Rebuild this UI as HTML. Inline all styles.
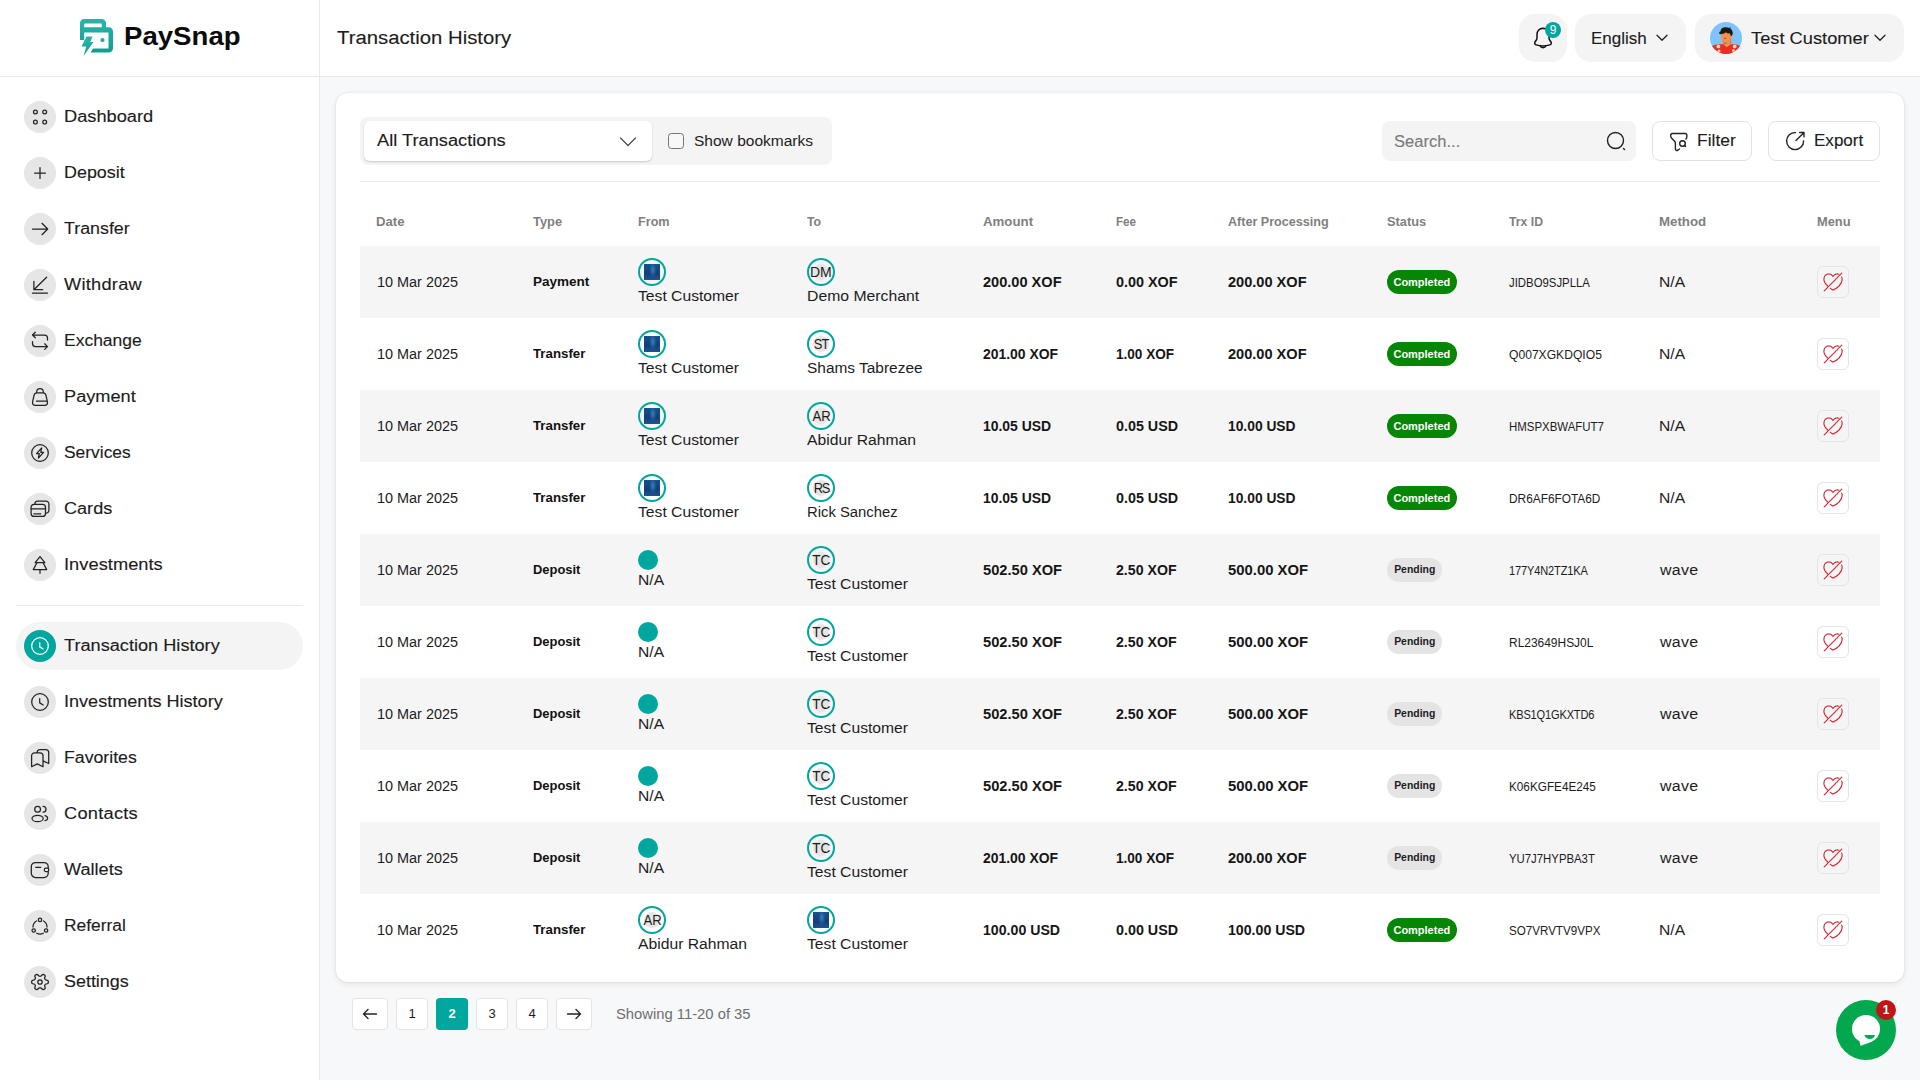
<!DOCTYPE html>
<html lang="en"><head><meta charset="utf-8"><title>Transaction History</title>
<style>
html,body{margin:0;padding:0}
body{width:1920px;height:1080px;overflow:hidden;position:relative;background:#f7f8fa;font-family:"Liberation Sans", sans-serif}
</style></head><body>
<div style="position:absolute;left:0px;top:0px;width:320px;height:1080px;background:#fff;border-right:1px solid #e9e9e9;box-sizing:border-box"></div>
<div style="position:absolute;left:0px;top:76px;width:1920px;height:1px;background:#e9e9e9"></div>
<svg style="position:absolute;left:79px;top:18px" width="35" height="39" viewBox="0 0 35 39"><defs><linearGradient id="lg" x1="0" y1="0" x2="0" y2="1"><stop offset="0" stop-color="#2cb4ac"/><stop offset="1" stop-color="#0f9e93"/></linearGradient></defs>
<path fill="url(#lg)" fill-rule="evenodd" d="M5.200 1H22.800A4.200 4.200 0 0 1 27 5.200V9.300H29.800A4.200 4.200 0 0 1 34 13.500V30.300A4.200 4.200 0 0 1 29.800 34.500H11.500L14 30.500H29.500V14.500H5.200V22H1V5.200A4.200 4.200 0 0 1 5.200 1ZM6 5.500A1 1 0 0 0 5.200 6.500V9.300H22.800V6.500A1 1 0 0 0 21.800 5.500Z"/>
<circle cx="23.500" cy="22" r="2.100" fill="url(#lg)"/>
<path fill="url(#lg)" d="M7.500 18.500H13.500L11.300 24H14.500L4.500 38L7.300 28.500H2.500Z"/>
</svg>
<div style="position:absolute;left:24px;top:101px;width:32px;height:32px;border-radius:50%;background:#e6e6e6"></div>
<svg style="position:absolute;left:30px;top:107px;" width="20" height="20" viewBox="0 0 20 20" fill="none" stroke="#222" stroke-width="1.25" stroke-linecap="round" stroke-linejoin="round"><circle cx="5.4" cy="4.9" r="1.9"/><circle cx="14.7" cy="4.9" r="1.9"/><circle cx="5.4" cy="15.1" r="1.9"/><circle cx="14.7" cy="15.1" r="1.9"/></svg>
<div style="position:absolute;left:24px;top:157px;width:32px;height:32px;border-radius:50%;background:#e6e6e6"></div>
<svg style="position:absolute;left:30px;top:163px;" width="20" height="20" viewBox="0 0 20 20" fill="none" stroke="#222" stroke-width="1.25" stroke-linecap="round" stroke-linejoin="round"><path d="M4.6 10H15.4M10 4.6V15.4"/></svg>
<div style="position:absolute;left:24px;top:213px;width:32px;height:32px;border-radius:50%;background:#e6e6e6"></div>
<svg style="position:absolute;left:30px;top:219px;" width="20" height="20" viewBox="0 0 20 20" fill="none" stroke="#222" stroke-width="1.25" stroke-linecap="round" stroke-linejoin="round"><path d="M2.5 10H17.5M12 4.3L17.7 10L12 15.7"/></svg>
<div style="position:absolute;left:24px;top:269px;width:32px;height:32px;border-radius:50%;background:#e6e6e6"></div>
<svg style="position:absolute;left:30px;top:275px;" width="20" height="20" viewBox="0 0 20 20" fill="none" stroke="#222" stroke-width="1.25" stroke-linecap="round" stroke-linejoin="round"><path d="M16.6 2.2L3.9 14.7M3.9 6.4V14.7H12.7M2.5 18.1H17.5"/></svg>
<div style="position:absolute;left:24px;top:325px;width:32px;height:32px;border-radius:50%;background:#e6e6e6"></div>
<svg style="position:absolute;left:30px;top:331px;" width="20" height="20" viewBox="0 0 20 20" fill="none" stroke="#222" stroke-width="1.25" stroke-linecap="round" stroke-linejoin="round"><path d="M5.3 1.2L2.5 4L5.3 6.8M2.5 4H14.5a3 3 0 0 1 3 3V9.1M14.7 12.8L17.5 15.6L14.7 18.4M17.5 15.6H5.5a3 3 0 0 1-3-3V10.5"/></svg>
<div style="position:absolute;left:24px;top:381px;width:32px;height:32px;border-radius:50%;background:#e6e6e6"></div>
<svg style="position:absolute;left:30px;top:387px;" width="20" height="20" viewBox="0 0 20 20" fill="none" stroke="#222" stroke-width="1.25" stroke-linecap="round" stroke-linejoin="round"><path d="M7 5.8h6c1.6 0 2.6.8 3 2.6l1.4 6.4c.4 2-.6 3.5-2.7 3.5H5.3c-2.1 0-3.1-1.5-2.7-3.5L4 8.4c.4-1.8 1.4-2.6 3-2.6zM6.7 5.8V5a3.3 3.3 0 0 1 6.6 0v.8M6.5 14.2H17.2"/></svg>
<div style="position:absolute;left:24px;top:437px;width:32px;height:32px;border-radius:50%;background:#e6e6e6"></div>
<svg style="position:absolute;left:30px;top:443px;" width="20" height="20" viewBox="0 0 20 20" fill="none" stroke="#222" stroke-width="1.25" stroke-linecap="round" stroke-linejoin="round"><circle cx="10" cy="10" r="8.3"/><path d="M11.700 4.900L6.600 10.600H9.300L8.400 15.100L13.500 9.300H10.800Z"/></svg>
<div style="position:absolute;left:24px;top:493px;width:32px;height:32px;border-radius:50%;background:#e6e6e6"></div>
<svg style="position:absolute;left:30px;top:499px;" width="20" height="20" viewBox="0 0 20 20" fill="none" stroke="#222" stroke-width="1.25" stroke-linecap="round" stroke-linejoin="round"><rect x="1.1" y="5.4" width="14.4" height="12" rx="3"/><path d="M4.8 5.4V5a3 3 0 0 1 3-3H15.9a3 3 0 0 1 3 3V11.2a3 3 0 0 1-3 3h-.4M1.1 9.8H15.5M3.9 14.8H6.2M7.1 14.8H10.8"/></svg>
<div style="position:absolute;left:24px;top:549px;width:32px;height:32px;border-radius:50%;background:#e6e6e6"></div>
<svg style="position:absolute;left:30px;top:555px;" width="20" height="20" viewBox="0 0 20 20" fill="none" stroke="#222" stroke-width="1.25" stroke-linecap="round" stroke-linejoin="round"><path d="M10 1.7L5.2 7.7H14.8ZM6.9 7.7L3.3 14.6H16.7L13.1 7.7M10 14.6V18.3"/></svg>
<div style="position:absolute;left:16px;top:605px;width:287px;height:1px;background:#e9e9e9"></div>
<div style="position:absolute;left:16px;top:622px;width:287px;height:48px;border-radius:24px;background:#f4f4f4"></div>
<div style="position:absolute;left:24px;top:630px;width:32px;height:32px;border-radius:50%;background:#01a79e"></div>
<svg style="position:absolute;left:30px;top:636px;" width="20" height="20" viewBox="0 0 20 20" fill="none" stroke="#fff" stroke-width="1.25" stroke-linecap="round" stroke-linejoin="round"><circle cx="10" cy="10" r="8.3"/><path d="M9.7 6.5V10.9L13.2 13"/></svg>
<div style="position:absolute;left:24px;top:686px;width:32px;height:32px;border-radius:50%;background:#e6e6e6"></div>
<svg style="position:absolute;left:30px;top:692px;" width="20" height="20" viewBox="0 0 20 20" fill="none" stroke="#222" stroke-width="1.25" stroke-linecap="round" stroke-linejoin="round"><circle cx="10" cy="10" r="8.3"/><path d="M9.7 6.5V10.9L13.2 13"/></svg>
<div style="position:absolute;left:24px;top:742px;width:32px;height:32px;border-radius:50%;background:#e6e6e6"></div>
<svg style="position:absolute;left:30px;top:748px;" width="20" height="20" viewBox="0 0 20 20" fill="none" stroke="#222" stroke-width="1.25" stroke-linecap="round" stroke-linejoin="round"><path d="M4.6 4.8H10a3 3 0 0 1 3 3V18.7L7.3 15.9L1.6 18.7V7.8a3 3 0 0 1 3-3zM7.1 4.8V4.6a3 3 0 0 1 3-3H15.7a3 3 0 0 1 3 3V15.5L13 12.9"/></svg>
<div style="position:absolute;left:24px;top:798px;width:32px;height:32px;border-radius:50%;background:#e6e6e6"></div>
<svg style="position:absolute;left:30px;top:804px;" width="20" height="20" viewBox="0 0 20 20" fill="none" stroke="#222" stroke-width="1.25" stroke-linecap="round" stroke-linejoin="round"><circle cx="7.6" cy="5.3" r="2.9"/><ellipse cx="7.6" cy="14.5" rx="5.6" ry="3.2"/><path d="M13.1 2.4a2.9 2.9 0 0 1 0 5.8M15 11.7c1.6.4 2.6 1.4 2.6 2.5s-1 2.100-2.600 2.500"/></svg>
<div style="position:absolute;left:24px;top:854px;width:32px;height:32px;border-radius:50%;background:#e6e6e6"></div>
<svg style="position:absolute;left:30px;top:860px;" width="20" height="20" viewBox="0 0 20 20" fill="none" stroke="#222" stroke-width="1.25" stroke-linecap="round" stroke-linejoin="round"><rect x="1.3" y="2.5" width="16.9" height="15" rx="4.2"/><path d="M5.7 7.300H10.800"/><rect x="14.300" y="8.200" width="4.400" height="3.400" rx="1.500" fill="#f4f4f4"/></svg>
<div style="position:absolute;left:24px;top:910px;width:32px;height:32px;border-radius:50%;background:#e6e6e6"></div>
<svg style="position:absolute;left:30px;top:916px;" width="20" height="20" viewBox="0 0 20 20" fill="none" stroke="#222" stroke-width="1.25" stroke-linecap="round" stroke-linejoin="round"><circle cx="10" cy="3.9" r="1.7"/><circle cx="3.7" cy="14.500" r="1.7"/><circle cx="16.100" cy="14.500" r="1.700"/><path d="M13.500 4.940A7 7 0 0 1 17 11M13.290 17.180A7 7 0 0 1 6.710 17.180M3 11A7 7 0 0 1 6.500 4.940"/></svg>
<div style="position:absolute;left:24px;top:966px;width:32px;height:32px;border-radius:50%;background:#e6e6e6"></div>
<svg style="position:absolute;left:30px;top:972px;" width="20" height="20" viewBox="0 0 20 20" fill="none" stroke="#222" stroke-width="1.25" stroke-linecap="round" stroke-linejoin="round"><path d="M18.30 10.00 L18.28 10.54 L18.23 11.08 L17.71 11.53 L16.81 11.82 L15.91 12.00 L15.36 12.22 L15.20 12.57 L15.02 12.90 L14.82 13.22 L14.60 13.53 L14.69 14.11 L14.99 14.99 L15.18 15.91 L15.05 16.58 L14.61 16.90 L14.15 17.19 L13.67 17.44 L13.18 17.67 L12.53 17.45 L11.82 16.81 L11.22 16.12 L10.76 15.75 L10.38 15.79 L10.00 15.80 L9.62 15.79 L9.24 15.75 L8.78 16.12 L8.18 16.81 L7.47 17.45 L6.82 17.67 L6.33 17.44 L5.85 17.19 L5.39 16.90 L4.95 16.58 L4.82 15.91 L5.01 14.99 L5.31 14.11 L5.40 13.53 L5.18 13.22 L4.98 12.90 L4.80 12.57 L4.64 12.22 L4.09 12.00 L3.19 11.82 L2.29 11.53 L1.77 11.08 L1.72 10.54 L1.70 10.00 L1.72 9.46 L1.77 8.92 L2.29 8.47 L3.19 8.18 L4.09 8.00 L4.64 7.78 L4.80 7.43 L4.98 7.10 L5.18 6.78 L5.40 6.47 L5.31 5.89 L5.01 5.01 L4.82 4.09 L4.95 3.42 L5.39 3.10 L5.85 2.81 L6.33 2.56 L6.82 2.33 L7.47 2.55 L8.18 3.19 L8.78 3.88 L9.24 4.25 L9.62 4.21 L10.00 4.20 L10.38 4.21 L10.76 4.25 L11.22 3.88 L11.82 3.19 L12.53 2.55 L13.18 2.33 L13.67 2.56 L14.15 2.81 L14.61 3.10 L15.05 3.42 L15.18 4.09 L14.99 5.01 L14.69 5.89 L14.60 6.47 L14.82 6.78 L15.02 7.10 L15.20 7.43 L15.36 7.78 L15.91 8.00 L16.81 8.18 L17.71 8.47 L18.23 8.92 L18.28 9.46Z"/><circle cx="10" cy="10" r="2.200"/></svg>
<div style="position:absolute;left:320px;top:0px;width:1600px;height:76px;background:#fff"></div>
<div style="position:absolute;left:1519px;top:14px;width:48px;height:48px;border-radius:16px;background:#f4f4f4"></div>
<div style="position:absolute;left:1575px;top:14px;width:111px;height:48px;border-radius:16px;background:#f4f4f4"></div>
<div style="position:absolute;left:1695px;top:14px;width:209px;height:48px;border-radius:16px;background:#f4f4f4"></div>
<svg style="position:absolute;left:1531px;top:25px;" width="24" height="26" viewBox="0 0 24 26" fill="none" stroke="#111" stroke-width="1.5" stroke-linecap="round" stroke-linejoin="round"><path d="M12 3.200c-3.500 0-6 2.700-6 6.200v3.300c0 .9-.4 2-1 2.800l-1 1.500c-.7 1.200-.2 2.500 1.100 2.900 4.500 1.400 9.300 1.400 13.800 0 1.200-.4 1.800-1.800 1.100-2.900l-1-1.500c-.6-.8-1-1.900-1-2.800V9.400c0-3.400-2.700-6.200-6-6.200z"/><path d="M9 20.800c.6 1.300 1.700 2 3 2s2.400-.7 3-2"/></svg>
<div style="position:absolute;left:1545px;top:22px;width:16px;height:16px;border-radius:50%;background:#01a79e"></div>
<svg style="position:absolute;left:1656px;top:33.5px;" width="12" height="8" viewBox="0 0 12 8" fill="none" stroke="#222" stroke-width="1.3" stroke-linecap="round" stroke-linejoin="round"><path d="M1 1.300L6 6.300L11 1.300"/></svg>
<svg style="position:absolute;left:1710px;top:22px" width="32" height="32" viewBox="0 0 32 32">
<defs><clipPath id="av"><circle cx="16" cy="16" r="16"/></clipPath></defs>
<g clip-path="url(#av)"><rect width="32" height="32" fill="#80c2fb"/>
<path d="M0 26.500c1.500-2.500 4-3.800 8-4.200h16.500c4 .4 6.500 1.700 7.500 4.200V32H0z" fill="#ee2b25"/>
<path d="M11.300 12.500c0-2 1.500-3 4.500-3l5.500.5c1.300 0 1.600 1.300 1.400 2.300-.1.700-.6 1.200-1.300 1.300l-.3 8.700-4.600 3-3-3 .3-1.500c-1.700-.6-2.500-2.300-2.500-4.500z" fill="#f5914a"/>
<path d="M21 13.500v8.800l-1.200.7z" fill="#d9702f"/>
<path d="M9.100 11.500c-.2-1.300.8-2 1.600-2.300-.3-1.500 1-3 3-3.600 1.800-.6 4-.4 5.600.4l1.300-1.300-.2 2c1.500 1 2.400 2.700 2.400 4.600l-.9 2.500-1.200.1-.8-2.600c-1.300.4-3-.2-3.900-1.100-1.300.9-2.800 1.700-4.300 1.700-.9.500-1.900.2-2.600-.4z" fill="#1c1a14"/>
<path d="M14 16.200c.5-.6 1.500-.7 2-.3-.4.800-1.500 1.100-2 .3z" fill="#2b3140"/>
<path d="M13.200 21c1 .5 2.500.5 3.500.2" stroke="#c5342c" stroke-width=".7" fill="none"/>
<circle cx="8.400" cy="24.400" r="1.900" fill="#f8dca8"/><circle cx="24.700" cy="24.400" r="1.900" fill="#f8dca8"/><circle cx="9" cy="28.900" r="1.500" fill="#f6cf96"/><circle cx="23.500" cy="28.500" r="1.500" fill="#f6cf96"/>
</g></svg>
<svg style="position:absolute;left:1874px;top:33.5px;" width="12" height="8" viewBox="0 0 12 8" fill="none" stroke="#222" stroke-width="1.3" stroke-linecap="round" stroke-linejoin="round"><path d="M1 1.300L6 6.300L11 1.300"/></svg>
<div style="position:absolute;left:320px;top:77px;width:1600px;height:1003px;background:#f7f8fa"></div>
<div style="position:absolute;left:336px;top:93px;width:1568px;height:889px;background:#fff;border-radius:12px;box-shadow:0 2px 6px rgba(0,0,0,.09),0 0 2px rgba(0,0,0,.10)"></div>
<div style="position:absolute;left:360px;top:117px;width:472px;height:48px;background:#f4f4f4;border-radius:8px"></div>
<div style="position:absolute;left:364px;top:121px;width:288px;height:40px;background:#fff;border-radius:6px;box-shadow:0 1px 2px rgba(0,0,0,.18)"></div>
<svg style="position:absolute;left:619px;top:135.5px;" width="18" height="12" viewBox="0 0 18 12" fill="none" stroke="#4a4a4a" stroke-width="1.2" stroke-linecap="round" stroke-linejoin="round"><path d="M1.500 2L9 9.500L16.500 2"/></svg>
<div style="position:absolute;left:668px;top:133px;width:16px;height:16px;box-sizing:border-box;border:1px solid #767676;border-radius:3.500px;background:#f8f8f8"></div>
<div style="position:absolute;left:1382px;top:121px;width:254px;height:40px;background:#f4f4f4;border-radius:8px"></div>
<svg style="position:absolute;left:1604px;top:129px;" width="24" height="24" viewBox="0 0 24 24" fill="none" stroke="#222" stroke-width="1.4" stroke-linecap="round" stroke-linejoin="round"><circle cx="11.500" cy="11.500" r="8"/><path d="M19.500 19.500l1 1"/></svg>
<div style="position:absolute;left:1652px;top:121px;width:100px;height:40px;box-sizing:border-box;background:#fff;border:1px solid #e2e2e2;border-radius:8px"></div>
<svg style="position:absolute;left:1668px;top:130px;" width="22" height="22" viewBox="0 0 22 22" fill="none" stroke="#222" stroke-width="1.4" stroke-linecap="round" stroke-linejoin="round"><path d="M4.500 3.500h12.500c1 0 1.800.8 1.800 1.800v1.700c0 .700-.4 1.500-.9 2M11.500 19l-2 1.300c-.9.500-2.100-.1-2.100-1.200v-5.600c0-.7-.4-1.700-.8-2.200L3.500 8c-.5-.5-.8-1.400-.8-2V5.400c0-1 .8-1.900 1.800-1.900"/><circle cx="14.500" cy="13.500" r="2.800"/><path d="M17.500 16.500l-.9-.9"/></svg>
<div style="position:absolute;left:1768px;top:121px;width:112px;height:40px;box-sizing:border-box;background:#fff;border:1px solid #e2e2e2;border-radius:8px"></div>
<svg style="position:absolute;left:1784px;top:130px;" width="22" height="22" viewBox="0 0 22 22" fill="none" stroke="#222" stroke-width="1.4" stroke-linecap="round" stroke-linejoin="round"><path d="M11.500 2.600A8.500 8.500 0 1 0 19.600 11M12 10.500L19.300 3.200M20 6.800V2.500H15.700"/></svg>
<div style="position:absolute;left:360px;top:181px;width:1520px;height:1px;background:#ededed"></div>
<div style="position:absolute;left:360px;top:246px;width:1520px;height:72px;background:#f5f5f5"></div>
<div style="position:absolute;left:638px;top:258px;width:28px;height:28px;box-sizing:border-box;border-radius:50%;border:2px solid #01a79e"></div>
<div style="position:absolute;left:644px;top:264px;width:16px;height:16px;background:radial-gradient(ellipse 4px 9px at 55% 35%,#3f7fb8 0%,rgba(40,100,160,.5) 60%,rgba(20,70,130,0) 100%),linear-gradient(180deg,#17508f 0%,#123f78 60%,#1a5493 100%)"></div>
<div style="position:absolute;left:807px;top:258px;width:28px;height:28px;box-sizing:border-box;border-radius:50%;border:2px solid #01a79e"></div>
<div style="position:absolute;left:813px;top:264px;width:16px;height:16px;border-radius:50%;background:#e5e5e5"></div>
<div style="position:absolute;left:1387px;top:270px;width:70px;height:24px;border-radius:12px;background:#058705"></div>
<div style="position:absolute;left:1817px;top:266px;width:32px;height:32px;box-sizing:border-box;border:1px solid #e4e4e4;border-radius:6px"></div>
<svg style="position:absolute;left:1823px;top:272px;" width="20" height="20" viewBox="0 0 20 20" fill="none" stroke="#d3303a" stroke-width="1.2" stroke-linecap="round" stroke-linejoin="round"><path d="M4.9 14.2C2.6 12.2 .9 9.900 .9 7.300C.9 4.300 3 1.900 5.700 1.900C7.500 1.900 9.100 2.800 10.100 4.300C11 2.900 12.600 1.900 14.400 1.900C15 1.900 15.500 2 16 2.200"/><path d="M18.600 5.200C19 6 19.200 6.600 19.200 7.300C19.200 12.600 13.600 16.400 10.800 17.600C10.400 17.800 9.800 17.800 9.400 17.600C8.800 17.400 8.100 17 7.300 16.500"/><path d="M18.800 1.200L1.200 18.800"/></svg>
<div style="position:absolute;left:638px;top:330px;width:28px;height:28px;box-sizing:border-box;border-radius:50%;border:2px solid #01a79e"></div>
<div style="position:absolute;left:644px;top:336px;width:16px;height:16px;background:radial-gradient(ellipse 4px 9px at 55% 35%,#3f7fb8 0%,rgba(40,100,160,.5) 60%,rgba(20,70,130,0) 100%),linear-gradient(180deg,#17508f 0%,#123f78 60%,#1a5493 100%)"></div>
<div style="position:absolute;left:807px;top:330px;width:28px;height:28px;box-sizing:border-box;border-radius:50%;border:2px solid #01a79e"></div>
<div style="position:absolute;left:813px;top:336px;width:16px;height:16px;border-radius:50%;background:#e5e5e5"></div>
<div style="position:absolute;left:1387px;top:342px;width:70px;height:24px;border-radius:12px;background:#058705"></div>
<div style="position:absolute;left:1817px;top:338px;width:32px;height:32px;box-sizing:border-box;border:1px solid #e4e4e4;border-radius:6px"></div>
<svg style="position:absolute;left:1823px;top:344px;" width="20" height="20" viewBox="0 0 20 20" fill="none" stroke="#d3303a" stroke-width="1.2" stroke-linecap="round" stroke-linejoin="round"><path d="M4.9 14.2C2.6 12.2 .9 9.900 .9 7.300C.9 4.300 3 1.900 5.700 1.900C7.500 1.900 9.100 2.800 10.100 4.300C11 2.900 12.600 1.900 14.400 1.900C15 1.900 15.500 2 16 2.200"/><path d="M18.600 5.200C19 6 19.200 6.600 19.200 7.300C19.200 12.600 13.600 16.400 10.800 17.600C10.400 17.800 9.800 17.800 9.400 17.600C8.800 17.400 8.100 17 7.300 16.500"/><path d="M18.800 1.200L1.200 18.800"/></svg>
<div style="position:absolute;left:360px;top:390px;width:1520px;height:72px;background:#f5f5f5"></div>
<div style="position:absolute;left:638px;top:402px;width:28px;height:28px;box-sizing:border-box;border-radius:50%;border:2px solid #01a79e"></div>
<div style="position:absolute;left:644px;top:408px;width:16px;height:16px;background:radial-gradient(ellipse 4px 9px at 55% 35%,#3f7fb8 0%,rgba(40,100,160,.5) 60%,rgba(20,70,130,0) 100%),linear-gradient(180deg,#17508f 0%,#123f78 60%,#1a5493 100%)"></div>
<div style="position:absolute;left:807px;top:402px;width:28px;height:28px;box-sizing:border-box;border-radius:50%;border:2px solid #01a79e"></div>
<div style="position:absolute;left:813px;top:408px;width:16px;height:16px;border-radius:50%;background:#e5e5e5"></div>
<div style="position:absolute;left:1387px;top:414px;width:70px;height:24px;border-radius:12px;background:#058705"></div>
<div style="position:absolute;left:1817px;top:410px;width:32px;height:32px;box-sizing:border-box;border:1px solid #e4e4e4;border-radius:6px"></div>
<svg style="position:absolute;left:1823px;top:416px;" width="20" height="20" viewBox="0 0 20 20" fill="none" stroke="#d3303a" stroke-width="1.2" stroke-linecap="round" stroke-linejoin="round"><path d="M4.9 14.2C2.6 12.2 .9 9.900 .9 7.300C.9 4.300 3 1.900 5.700 1.900C7.500 1.900 9.100 2.800 10.100 4.300C11 2.900 12.600 1.900 14.400 1.900C15 1.900 15.500 2 16 2.200"/><path d="M18.600 5.200C19 6 19.200 6.600 19.200 7.300C19.200 12.600 13.600 16.400 10.800 17.600C10.400 17.800 9.800 17.800 9.400 17.600C8.800 17.400 8.100 17 7.300 16.500"/><path d="M18.800 1.200L1.200 18.800"/></svg>
<div style="position:absolute;left:638px;top:474px;width:28px;height:28px;box-sizing:border-box;border-radius:50%;border:2px solid #01a79e"></div>
<div style="position:absolute;left:644px;top:480px;width:16px;height:16px;background:radial-gradient(ellipse 4px 9px at 55% 35%,#3f7fb8 0%,rgba(40,100,160,.5) 60%,rgba(20,70,130,0) 100%),linear-gradient(180deg,#17508f 0%,#123f78 60%,#1a5493 100%)"></div>
<div style="position:absolute;left:807px;top:474px;width:28px;height:28px;box-sizing:border-box;border-radius:50%;border:2px solid #01a79e"></div>
<div style="position:absolute;left:813px;top:480px;width:16px;height:16px;border-radius:50%;background:#e5e5e5"></div>
<div style="position:absolute;left:1387px;top:486px;width:70px;height:24px;border-radius:12px;background:#058705"></div>
<div style="position:absolute;left:1817px;top:482px;width:32px;height:32px;box-sizing:border-box;border:1px solid #e4e4e4;border-radius:6px"></div>
<svg style="position:absolute;left:1823px;top:488px;" width="20" height="20" viewBox="0 0 20 20" fill="none" stroke="#d3303a" stroke-width="1.2" stroke-linecap="round" stroke-linejoin="round"><path d="M4.9 14.2C2.6 12.2 .9 9.900 .9 7.300C.9 4.300 3 1.900 5.700 1.900C7.500 1.900 9.100 2.800 10.100 4.300C11 2.900 12.600 1.900 14.400 1.900C15 1.900 15.500 2 16 2.200"/><path d="M18.600 5.200C19 6 19.200 6.600 19.200 7.300C19.200 12.600 13.600 16.400 10.800 17.600C10.400 17.800 9.800 17.800 9.400 17.600C8.800 17.400 8.100 17 7.300 16.500"/><path d="M18.800 1.200L1.200 18.800"/></svg>
<div style="position:absolute;left:360px;top:534px;width:1520px;height:72px;background:#f5f5f5"></div>
<div style="position:absolute;left:638px;top:550px;width:20px;height:20px;border-radius:50%;background:#01a79e"></div>
<div style="position:absolute;left:807px;top:546px;width:28px;height:28px;box-sizing:border-box;border-radius:50%;border:2px solid #01a79e"></div>
<div style="position:absolute;left:813px;top:552px;width:16px;height:16px;border-radius:50%;background:#e5e5e5"></div>
<div style="position:absolute;left:1387px;top:558px;width:55px;height:24px;border-radius:12px;background:#e4e4e4"></div>
<div style="position:absolute;left:1817px;top:554px;width:32px;height:32px;box-sizing:border-box;border:1px solid #e4e4e4;border-radius:6px"></div>
<svg style="position:absolute;left:1823px;top:560px;" width="20" height="20" viewBox="0 0 20 20" fill="none" stroke="#d3303a" stroke-width="1.2" stroke-linecap="round" stroke-linejoin="round"><path d="M4.9 14.2C2.6 12.2 .9 9.900 .9 7.300C.9 4.300 3 1.900 5.700 1.900C7.500 1.900 9.100 2.800 10.100 4.300C11 2.900 12.600 1.900 14.400 1.900C15 1.900 15.500 2 16 2.200"/><path d="M18.600 5.200C19 6 19.200 6.600 19.200 7.300C19.200 12.600 13.600 16.400 10.800 17.600C10.400 17.800 9.800 17.800 9.400 17.600C8.800 17.400 8.100 17 7.300 16.500"/><path d="M18.800 1.200L1.200 18.800"/></svg>
<div style="position:absolute;left:638px;top:622px;width:20px;height:20px;border-radius:50%;background:#01a79e"></div>
<div style="position:absolute;left:807px;top:618px;width:28px;height:28px;box-sizing:border-box;border-radius:50%;border:2px solid #01a79e"></div>
<div style="position:absolute;left:813px;top:624px;width:16px;height:16px;border-radius:50%;background:#e5e5e5"></div>
<div style="position:absolute;left:1387px;top:630px;width:55px;height:24px;border-radius:12px;background:#e4e4e4"></div>
<div style="position:absolute;left:1817px;top:626px;width:32px;height:32px;box-sizing:border-box;border:1px solid #e4e4e4;border-radius:6px"></div>
<svg style="position:absolute;left:1823px;top:632px;" width="20" height="20" viewBox="0 0 20 20" fill="none" stroke="#d3303a" stroke-width="1.2" stroke-linecap="round" stroke-linejoin="round"><path d="M4.9 14.2C2.6 12.2 .9 9.900 .9 7.300C.9 4.300 3 1.900 5.700 1.900C7.500 1.900 9.100 2.800 10.100 4.300C11 2.900 12.600 1.900 14.400 1.900C15 1.900 15.500 2 16 2.200"/><path d="M18.600 5.200C19 6 19.200 6.600 19.200 7.300C19.200 12.600 13.600 16.400 10.800 17.600C10.400 17.800 9.800 17.800 9.400 17.600C8.800 17.400 8.100 17 7.300 16.500"/><path d="M18.800 1.200L1.200 18.800"/></svg>
<div style="position:absolute;left:360px;top:678px;width:1520px;height:72px;background:#f5f5f5"></div>
<div style="position:absolute;left:638px;top:694px;width:20px;height:20px;border-radius:50%;background:#01a79e"></div>
<div style="position:absolute;left:807px;top:690px;width:28px;height:28px;box-sizing:border-box;border-radius:50%;border:2px solid #01a79e"></div>
<div style="position:absolute;left:813px;top:696px;width:16px;height:16px;border-radius:50%;background:#e5e5e5"></div>
<div style="position:absolute;left:1387px;top:702px;width:55px;height:24px;border-radius:12px;background:#e4e4e4"></div>
<div style="position:absolute;left:1817px;top:698px;width:32px;height:32px;box-sizing:border-box;border:1px solid #e4e4e4;border-radius:6px"></div>
<svg style="position:absolute;left:1823px;top:704px;" width="20" height="20" viewBox="0 0 20 20" fill="none" stroke="#d3303a" stroke-width="1.2" stroke-linecap="round" stroke-linejoin="round"><path d="M4.9 14.2C2.6 12.2 .9 9.900 .9 7.300C.9 4.300 3 1.900 5.700 1.900C7.500 1.900 9.100 2.800 10.100 4.300C11 2.900 12.600 1.900 14.400 1.900C15 1.900 15.500 2 16 2.200"/><path d="M18.600 5.200C19 6 19.200 6.600 19.200 7.300C19.200 12.600 13.600 16.400 10.800 17.600C10.400 17.800 9.800 17.800 9.400 17.600C8.800 17.400 8.100 17 7.300 16.500"/><path d="M18.800 1.200L1.200 18.800"/></svg>
<div style="position:absolute;left:638px;top:766px;width:20px;height:20px;border-radius:50%;background:#01a79e"></div>
<div style="position:absolute;left:807px;top:762px;width:28px;height:28px;box-sizing:border-box;border-radius:50%;border:2px solid #01a79e"></div>
<div style="position:absolute;left:813px;top:768px;width:16px;height:16px;border-radius:50%;background:#e5e5e5"></div>
<div style="position:absolute;left:1387px;top:774px;width:55px;height:24px;border-radius:12px;background:#e4e4e4"></div>
<div style="position:absolute;left:1817px;top:770px;width:32px;height:32px;box-sizing:border-box;border:1px solid #e4e4e4;border-radius:6px"></div>
<svg style="position:absolute;left:1823px;top:776px;" width="20" height="20" viewBox="0 0 20 20" fill="none" stroke="#d3303a" stroke-width="1.2" stroke-linecap="round" stroke-linejoin="round"><path d="M4.9 14.2C2.6 12.2 .9 9.900 .9 7.300C.9 4.300 3 1.900 5.700 1.900C7.500 1.900 9.100 2.800 10.100 4.300C11 2.900 12.600 1.900 14.400 1.900C15 1.900 15.500 2 16 2.200"/><path d="M18.600 5.200C19 6 19.200 6.600 19.200 7.300C19.200 12.600 13.600 16.400 10.800 17.600C10.400 17.800 9.800 17.800 9.400 17.600C8.800 17.400 8.100 17 7.300 16.500"/><path d="M18.800 1.200L1.200 18.800"/></svg>
<div style="position:absolute;left:360px;top:822px;width:1520px;height:72px;background:#f5f5f5"></div>
<div style="position:absolute;left:638px;top:838px;width:20px;height:20px;border-radius:50%;background:#01a79e"></div>
<div style="position:absolute;left:807px;top:834px;width:28px;height:28px;box-sizing:border-box;border-radius:50%;border:2px solid #01a79e"></div>
<div style="position:absolute;left:813px;top:840px;width:16px;height:16px;border-radius:50%;background:#e5e5e5"></div>
<div style="position:absolute;left:1387px;top:846px;width:55px;height:24px;border-radius:12px;background:#e4e4e4"></div>
<div style="position:absolute;left:1817px;top:842px;width:32px;height:32px;box-sizing:border-box;border:1px solid #e4e4e4;border-radius:6px"></div>
<svg style="position:absolute;left:1823px;top:848px;" width="20" height="20" viewBox="0 0 20 20" fill="none" stroke="#d3303a" stroke-width="1.2" stroke-linecap="round" stroke-linejoin="round"><path d="M4.9 14.2C2.6 12.2 .9 9.900 .9 7.300C.9 4.300 3 1.900 5.700 1.900C7.500 1.900 9.100 2.800 10.100 4.300C11 2.900 12.600 1.900 14.400 1.900C15 1.900 15.500 2 16 2.200"/><path d="M18.600 5.200C19 6 19.200 6.600 19.200 7.300C19.200 12.600 13.600 16.400 10.800 17.600C10.400 17.800 9.800 17.800 9.400 17.600C8.800 17.400 8.100 17 7.300 16.500"/><path d="M18.800 1.200L1.200 18.800"/></svg>
<div style="position:absolute;left:638px;top:906px;width:28px;height:28px;box-sizing:border-box;border-radius:50%;border:2px solid #01a79e"></div>
<div style="position:absolute;left:644px;top:912px;width:16px;height:16px;border-radius:50%;background:#e5e5e5"></div>
<div style="position:absolute;left:807px;top:906px;width:28px;height:28px;box-sizing:border-box;border-radius:50%;border:2px solid #01a79e"></div>
<div style="position:absolute;left:813px;top:912px;width:16px;height:16px;background:radial-gradient(ellipse 4px 9px at 55% 35%,#3f7fb8 0%,rgba(40,100,160,.5) 60%,rgba(20,70,130,0) 100%),linear-gradient(180deg,#17508f 0%,#123f78 60%,#1a5493 100%)"></div>
<div style="position:absolute;left:1387px;top:918px;width:70px;height:24px;border-radius:12px;background:#058705"></div>
<div style="position:absolute;left:1817px;top:914px;width:32px;height:32px;box-sizing:border-box;border:1px solid #e4e4e4;border-radius:6px"></div>
<svg style="position:absolute;left:1823px;top:920px;" width="20" height="20" viewBox="0 0 20 20" fill="none" stroke="#d3303a" stroke-width="1.2" stroke-linecap="round" stroke-linejoin="round"><path d="M4.9 14.2C2.6 12.2 .9 9.900 .9 7.300C.9 4.300 3 1.900 5.700 1.900C7.500 1.900 9.100 2.800 10.100 4.300C11 2.900 12.600 1.900 14.400 1.900C15 1.900 15.500 2 16 2.200"/><path d="M18.600 5.200C19 6 19.200 6.600 19.200 7.300C19.200 12.600 13.600 16.400 10.800 17.600C10.400 17.800 9.800 17.800 9.400 17.600C8.800 17.400 8.100 17 7.300 16.500"/><path d="M18.800 1.200L1.200 18.800"/></svg>
<div style="position:absolute;left:352px;top:998px;width:36px;height:32px;box-sizing:border-box;background:#fff;border:1px solid #e4e4e4;border-radius:4px"></div>
<svg style="position:absolute;left:361px;top:1006px;" width="18" height="16" viewBox="0 0 18 16" fill="none" stroke="#222" stroke-width="1.3" stroke-linecap="round" stroke-linejoin="round"><path d="M15.500 8H2.500M7 3.500L2.500 8L7 12.500"/></svg>
<div style="position:absolute;left:396px;top:998px;width:32px;height:32px;box-sizing:border-box;background:#fff;border:1px solid #e4e4e4;border-radius:4px"></div>
<div style="position:absolute;left:436px;top:998px;width:32px;height:32px;background:#01a79e;border-radius:4px"></div>
<div style="position:absolute;left:476px;top:998px;width:32px;height:32px;box-sizing:border-box;background:#fff;border:1px solid #e4e4e4;border-radius:4px"></div>
<div style="position:absolute;left:516px;top:998px;width:32px;height:32px;box-sizing:border-box;background:#fff;border:1px solid #e4e4e4;border-radius:4px"></div>
<div style="position:absolute;left:556px;top:998px;width:36px;height:32px;box-sizing:border-box;background:#fff;border:1px solid #e4e4e4;border-radius:4px"></div>
<svg style="position:absolute;left:565px;top:1006px;" width="18" height="16" viewBox="0 0 18 16" fill="none" stroke="#222" stroke-width="1.3" stroke-linecap="round" stroke-linejoin="round"><path d="M2.500 8H15.500M11 3.500L15.500 8L11 12.500"/></svg>
<svg style="position:absolute;left:1836px;top:1000px" width="60" height="60" viewBox="0 0 60 60">
<circle cx="30" cy="30" r="30" fill="#03a84e"/>
<circle cx="30" cy="28.900" r="14" fill="#fff"/>
<path fill="#fff" d="M23.400 41.300L24.600 45.900C28 44.500 37 42.300 40.800 37.300Z"/>
<path fill="#03a84e" d="M28.400 35H39C37.500 40.300 30 40.300 28.400 35Z"/>
<circle cx="50" cy="10" r="10" fill="#c11515"/></svg>
<span style="position:absolute;left:124.20px;top:20.40px;font-size:25.5px;font-weight:700;color:#0b0b0b;line-height:32px;white-space:pre;transform:scaleX(1.0824);transform-origin:0 50%;">PaySnap</span>
<span style="position:absolute;left:63.60px;top:106.00px;font-size:16px;font-weight:400;color:#1c1c1c;line-height:21px;white-space:pre;transform:scaleX(1.1400);transform-origin:0 50%;-webkit-text-stroke:0.12px;">Dashboard</span>
<span style="position:absolute;left:63.60px;top:162.00px;font-size:16px;font-weight:400;color:#1c1c1c;line-height:21px;white-space:pre;transform:scaleX(1.1196);transform-origin:0 50%;-webkit-text-stroke:0.12px;">Deposit</span>
<span style="position:absolute;left:63.60px;top:218.00px;font-size:16px;font-weight:400;color:#1c1c1c;line-height:21px;white-space:pre;transform:scaleX(1.1145);transform-origin:0 50%;-webkit-text-stroke:0.12px;">Transfer</span>
<span style="position:absolute;left:63.60px;top:274.00px;font-size:16px;font-weight:400;color:#1c1c1c;line-height:21px;white-space:pre;letter-spacing:0.215px;transform:scaleX(1.1400);transform-origin:0 50%;-webkit-text-stroke:0.12px;">Withdraw</span>
<span style="position:absolute;left:63.60px;top:330.00px;font-size:16px;font-weight:400;color:#1c1c1c;line-height:21px;white-space:pre;transform:scaleX(1.0923);transform-origin:0 50%;-webkit-text-stroke:0.12px;">Exchange</span>
<span style="position:absolute;left:63.60px;top:386.00px;font-size:16px;font-weight:400;color:#1c1c1c;line-height:21px;white-space:pre;transform:scaleX(1.1362);transform-origin:0 50%;-webkit-text-stroke:0.12px;">Payment</span>
<span style="position:absolute;left:63.60px;top:442.00px;font-size:16px;font-weight:400;color:#1c1c1c;line-height:21px;white-space:pre;transform:scaleX(1.0877);transform-origin:0 50%;-webkit-text-stroke:0.12px;">Services</span>
<span style="position:absolute;left:63.60px;top:498.00px;font-size:16px;font-weight:400;color:#1c1c1c;line-height:21px;white-space:pre;transform:scaleX(1.1301);transform-origin:0 50%;-webkit-text-stroke:0.12px;">Cards</span>
<span style="position:absolute;left:63.60px;top:554.00px;font-size:16px;font-weight:400;color:#1c1c1c;line-height:21px;white-space:pre;letter-spacing:0.035px;transform:scaleX(1.1400);transform-origin:0 50%;-webkit-text-stroke:0.12px;">Investments</span>
<span style="position:absolute;left:63.60px;top:635.00px;font-size:16px;font-weight:400;color:#1c1c1c;line-height:21px;white-space:pre;transform:scaleX(1.1348);transform-origin:0 50%;-webkit-text-stroke:0.12px;">Transaction History</span>
<span style="position:absolute;left:63.60px;top:691.00px;font-size:16px;font-weight:400;color:#1c1c1c;line-height:21px;white-space:pre;transform:scaleX(1.1299);transform-origin:0 50%;-webkit-text-stroke:0.12px;">Investments History</span>
<span style="position:absolute;left:63.60px;top:747.00px;font-size:16px;font-weight:400;color:#1c1c1c;line-height:21px;white-space:pre;transform:scaleX(1.1055);transform-origin:0 50%;-webkit-text-stroke:0.12px;">Favorites</span>
<span style="position:absolute;left:63.60px;top:803.00px;font-size:16px;font-weight:400;color:#1c1c1c;line-height:21px;white-space:pre;letter-spacing:0.221px;transform:scaleX(1.1400);transform-origin:0 50%;-webkit-text-stroke:0.12px;">Contacts</span>
<span style="position:absolute;left:63.60px;top:859.00px;font-size:16px;font-weight:400;color:#1c1c1c;line-height:21px;white-space:pre;transform:scaleX(1.1327);transform-origin:0 50%;-webkit-text-stroke:0.12px;">Wallets</span>
<span style="position:absolute;left:63.60px;top:915.00px;font-size:16px;font-weight:400;color:#1c1c1c;line-height:21px;white-space:pre;transform:scaleX(1.0849);transform-origin:0 50%;-webkit-text-stroke:0.12px;">Referral</span>
<span style="position:absolute;left:63.60px;top:971.00px;font-size:16px;font-weight:400;color:#1c1c1c;line-height:21px;white-space:pre;transform:scaleX(1.1198);transform-origin:0 50%;-webkit-text-stroke:0.12px;">Settings</span>
<span style="position:absolute;left:336.80px;top:26.00px;font-size:18px;font-weight:400;color:#1c1c1c;line-height:24px;white-space:pre;transform:scaleX(1.1284);transform-origin:0 50%;-webkit-text-stroke:0.12px;">Transaction History</span>
<span style="position:absolute;left:1549.66px;top:21.30px;font-size:12px;font-weight:400;color:#fff;line-height:18px;white-space:pre;">9</span>
<span style="position:absolute;left:1591.00px;top:27.50px;font-size:16px;font-weight:400;color:#1c1c1c;line-height:21px;white-space:pre;transform:scaleX(1.0620);transform-origin:0 50%;-webkit-text-stroke:0.12px;">English</span>
<span style="position:absolute;left:1751.00px;top:27.50px;font-size:16px;font-weight:400;color:#1c1c1c;line-height:21px;white-space:pre;letter-spacing:0.012px;transform:scaleX(1.1400);transform-origin:0 50%;-webkit-text-stroke:0.12px;">Test Customer</span>
<span style="position:absolute;left:376.50px;top:130.00px;font-size:16px;font-weight:400;color:#1c1c1c;line-height:21px;white-space:pre;transform:scaleX(1.1399);transform-origin:0 50%;-webkit-text-stroke:0.12px;">All Transactions</span>
<span style="position:absolute;left:693.60px;top:131.00px;font-size:14px;font-weight:400;color:#1c1c1c;line-height:20px;white-space:pre;transform:scaleX(1.1087);transform-origin:0 50%;">Show bookmarks</span>
<span style="position:absolute;left:1394.00px;top:131.00px;font-size:16px;font-weight:400;color:#7a7a7a;line-height:21px;white-space:pre;transform:scaleX(1.0345);transform-origin:0 50%;-webkit-text-stroke:0.12px;">Search...</span>
<span style="position:absolute;left:1697.00px;top:130.00px;font-size:16px;font-weight:400;color:#1c1c1c;line-height:21px;white-space:pre;transform:scaleX(1.0893);transform-origin:0 50%;-webkit-text-stroke:0.12px;">Filter</span>
<span style="position:absolute;left:1813.50px;top:130.00px;font-size:16px;font-weight:400;color:#1c1c1c;line-height:21px;white-space:pre;transform:scaleX(1.0646);transform-origin:0 50%;-webkit-text-stroke:0.12px;">Export</span>
<span style="position:absolute;left:375.60px;top:213.00px;font-size:12px;font-weight:700;color:#7f7f7f;line-height:18px;white-space:pre;transform:scaleX(1.0986);transform-origin:0 50%;">Date</span>
<span style="position:absolute;left:532.60px;top:213.00px;font-size:12px;font-weight:700;color:#7f7f7f;line-height:18px;white-space:pre;transform:scaleX(1.0721);transform-origin:0 50%;">Type</span>
<span style="position:absolute;left:637.60px;top:213.00px;font-size:12px;font-weight:700;color:#7f7f7f;line-height:18px;white-space:pre;transform:scaleX(1.0527);transform-origin:0 50%;">From</span>
<span style="position:absolute;left:806.60px;top:213.00px;font-size:12px;font-weight:700;color:#7f7f7f;line-height:18px;white-space:pre;transform:scaleX(1.0217);transform-origin:0 50%;">To</span>
<span style="position:absolute;left:982.60px;top:213.00px;font-size:12px;font-weight:700;color:#7f7f7f;line-height:18px;white-space:pre;transform:scaleX(1.1048);transform-origin:0 50%;">Amount</span>
<span style="position:absolute;left:1115.60px;top:213.00px;font-size:12px;font-weight:700;color:#7f7f7f;line-height:18px;white-space:pre;transform:scaleX(0.9706);transform-origin:0 50%;">Fee</span>
<span style="position:absolute;left:1227.60px;top:213.00px;font-size:12px;font-weight:700;color:#7f7f7f;line-height:18px;white-space:pre;transform:scaleX(1.0474);transform-origin:0 50%;">After Processing</span>
<span style="position:absolute;left:1386.60px;top:213.00px;font-size:12px;font-weight:700;color:#7f7f7f;line-height:18px;white-space:pre;transform:scaleX(1.0652);transform-origin:0 50%;">Status</span>
<span style="position:absolute;left:1508.60px;top:213.00px;font-size:12px;font-weight:700;color:#7f7f7f;line-height:18px;white-space:pre;transform:scaleX(1.0216);transform-origin:0 50%;">Trx ID</span>
<span style="position:absolute;left:1658.60px;top:213.00px;font-size:12px;font-weight:700;color:#7f7f7f;line-height:18px;white-space:pre;transform:scaleX(1.1037);transform-origin:0 50%;">Method</span>
<span style="position:absolute;left:1816.60px;top:213.00px;font-size:12px;font-weight:700;color:#7f7f7f;line-height:18px;white-space:pre;transform:scaleX(1.0713);transform-origin:0 50%;">Menu</span>
<span style="position:absolute;left:376.50px;top:272.00px;font-size:14px;font-weight:400;color:#1c1c1c;line-height:20px;white-space:pre;transform:scaleX(1.0312);transform-origin:0 50%;">10 Mar 2025</span>
<span style="position:absolute;left:533.30px;top:273.30px;font-size:12px;font-weight:700;color:#111;line-height:18px;white-space:pre;transform:scaleX(1.1269);transform-origin:0 50%;">Payment</span>
<span style="position:absolute;left:637.80px;top:286.00px;font-size:14px;font-weight:400;color:#1c1c1c;line-height:20px;white-space:pre;transform:scaleX(1.1198);transform-origin:0 50%;">Test Customer</span>
<span style="position:absolute;left:810.41px;top:262.00px;font-size:14px;font-weight:400;color:#1c1c1c;line-height:20px;white-space:pre;transform:scaleX(0.9990);transform-origin:50% 50%;">DM</span>
<span style="position:absolute;left:806.80px;top:286.00px;font-size:14px;font-weight:400;color:#1c1c1c;line-height:20px;white-space:pre;transform:scaleX(1.1252);transform-origin:0 50%;">Demo Merchant</span>
<span style="position:absolute;left:983.30px;top:272.00px;font-size:14px;font-weight:700;color:#161616;line-height:20px;white-space:pre;transform:scaleX(1.0405);transform-origin:0 50%;">200.00 XOF</span>
<span style="position:absolute;left:1116.30px;top:272.00px;font-size:14px;font-weight:700;color:#161616;line-height:20px;white-space:pre;transform:scaleX(1.0273);transform-origin:0 50%;">0.00 XOF</span>
<span style="position:absolute;left:1228.30px;top:272.00px;font-size:14px;font-weight:700;color:#161616;line-height:20px;white-space:pre;transform:scaleX(1.0405);transform-origin:0 50%;">200.00 XOF</span>
<span style="position:absolute;left:1396.16px;top:274.50px;font-size:10px;font-weight:700;color:#fff;line-height:15px;white-space:pre;transform:scaleX(1.0973);transform-origin:50% 50%;">Completed</span>
<span style="position:absolute;left:1509.30px;top:274.00px;font-size:12px;font-weight:400;color:#1c1c1c;line-height:18px;white-space:pre;transform:scaleX(0.9473);transform-origin:0 50%;">JIDBO9SJPLLA</span>
<span style="position:absolute;left:1659.30px;top:272.00px;font-size:14px;font-weight:400;color:#1c1c1c;line-height:20px;white-space:pre;transform:scaleX(1.1164);transform-origin:0 50%;">N/A</span>
<span style="position:absolute;left:376.50px;top:344.00px;font-size:14px;font-weight:400;color:#1c1c1c;line-height:20px;white-space:pre;transform:scaleX(1.0312);transform-origin:0 50%;">10 Mar 2025</span>
<span style="position:absolute;left:533.30px;top:345.30px;font-size:12px;font-weight:700;color:#111;line-height:18px;white-space:pre;transform:scaleX(1.1060);transform-origin:0 50%;">Transfer</span>
<span style="position:absolute;left:637.80px;top:358.00px;font-size:14px;font-weight:400;color:#1c1c1c;line-height:20px;white-space:pre;transform:scaleX(1.1198);transform-origin:0 50%;">Test Customer</span>
<span style="position:absolute;left:813.11px;top:334.00px;font-size:14px;font-weight:400;color:#1c1c1c;line-height:20px;white-space:pre;letter-spacing:-0.760px;transform:scaleX(0.9200);transform-origin:50% 50%;">ST</span>
<span style="position:absolute;left:806.80px;top:358.00px;font-size:14px;font-weight:400;color:#1c1c1c;line-height:20px;white-space:pre;transform:scaleX(1.1025);transform-origin:0 50%;">Shams Tabrezee</span>
<span style="position:absolute;left:983.30px;top:344.00px;font-size:14px;font-weight:700;color:#161616;line-height:20px;white-space:pre;transform:scaleX(0.9942);transform-origin:0 50%;">201.00 XOF</span>
<span style="position:absolute;left:1116.30px;top:344.00px;font-size:14px;font-weight:700;color:#161616;line-height:20px;white-space:pre;transform:scaleX(0.9689);transform-origin:0 50%;">1.00 XOF</span>
<span style="position:absolute;left:1228.30px;top:344.00px;font-size:14px;font-weight:700;color:#161616;line-height:20px;white-space:pre;transform:scaleX(1.0405);transform-origin:0 50%;">200.00 XOF</span>
<span style="position:absolute;left:1396.16px;top:346.50px;font-size:10px;font-weight:700;color:#fff;line-height:15px;white-space:pre;transform:scaleX(1.0973);transform-origin:50% 50%;">Completed</span>
<span style="position:absolute;left:1509.30px;top:346.00px;font-size:12px;font-weight:400;color:#1c1c1c;line-height:18px;white-space:pre;transform:scaleX(1.0091);transform-origin:0 50%;">Q007XGKDQIO5</span>
<span style="position:absolute;left:1659.30px;top:344.00px;font-size:14px;font-weight:400;color:#1c1c1c;line-height:20px;white-space:pre;transform:scaleX(1.1164);transform-origin:0 50%;">N/A</span>
<span style="position:absolute;left:376.50px;top:416.00px;font-size:14px;font-weight:400;color:#1c1c1c;line-height:20px;white-space:pre;transform:scaleX(1.0312);transform-origin:0 50%;">10 Mar 2025</span>
<span style="position:absolute;left:533.30px;top:417.30px;font-size:12px;font-weight:700;color:#111;line-height:18px;white-space:pre;transform:scaleX(1.1060);transform-origin:0 50%;">Transfer</span>
<span style="position:absolute;left:637.80px;top:430.00px;font-size:14px;font-weight:400;color:#1c1c1c;line-height:20px;white-space:pre;transform:scaleX(1.1198);transform-origin:0 50%;">Test Customer</span>
<span style="position:absolute;left:811.57px;top:406.00px;font-size:14px;font-weight:400;color:#1c1c1c;line-height:20px;white-space:pre;transform:scaleX(0.9387);transform-origin:50% 50%;">AR</span>
<span style="position:absolute;left:806.80px;top:430.00px;font-size:14px;font-weight:400;color:#1c1c1c;line-height:20px;white-space:pre;transform:scaleX(1.1211);transform-origin:0 50%;">Abidur Rahman</span>
<span style="position:absolute;left:983.30px;top:416.00px;font-size:14px;font-weight:700;color:#161616;line-height:20px;white-space:pre;transform:scaleX(0.9938);transform-origin:0 50%;">10.05 USD</span>
<span style="position:absolute;left:1116.30px;top:416.00px;font-size:14px;font-weight:700;color:#161616;line-height:20px;white-space:pre;transform:scaleX(1.0224);transform-origin:0 50%;">0.05 USD</span>
<span style="position:absolute;left:1228.30px;top:416.00px;font-size:14px;font-weight:700;color:#161616;line-height:20px;white-space:pre;transform:scaleX(0.9865);transform-origin:0 50%;">10.00 USD</span>
<span style="position:absolute;left:1396.16px;top:418.50px;font-size:10px;font-weight:700;color:#fff;line-height:15px;white-space:pre;transform:scaleX(1.0973);transform-origin:50% 50%;">Completed</span>
<span style="position:absolute;left:1509.30px;top:418.00px;font-size:12px;font-weight:400;color:#1c1c1c;line-height:18px;white-space:pre;transform:scaleX(0.9530);transform-origin:0 50%;">HMSPXBWAFUT7</span>
<span style="position:absolute;left:1659.30px;top:416.00px;font-size:14px;font-weight:400;color:#1c1c1c;line-height:20px;white-space:pre;transform:scaleX(1.1164);transform-origin:0 50%;">N/A</span>
<span style="position:absolute;left:376.50px;top:488.00px;font-size:14px;font-weight:400;color:#1c1c1c;line-height:20px;white-space:pre;transform:scaleX(1.0312);transform-origin:0 50%;">10 Mar 2025</span>
<span style="position:absolute;left:533.30px;top:489.30px;font-size:12px;font-weight:700;color:#111;line-height:18px;white-space:pre;transform:scaleX(1.1060);transform-origin:0 50%;">Transfer</span>
<span style="position:absolute;left:637.80px;top:502.00px;font-size:14px;font-weight:400;color:#1c1c1c;line-height:20px;white-space:pre;transform:scaleX(1.1198);transform-origin:0 50%;">Test Customer</span>
<span style="position:absolute;left:812.81px;top:478.00px;font-size:14px;font-weight:400;color:#1c1c1c;line-height:20px;white-space:pre;letter-spacing:-1.236px;transform:scaleX(0.9200);transform-origin:50% 50%;">RS</span>
<span style="position:absolute;left:806.80px;top:502.00px;font-size:14px;font-weight:400;color:#1c1c1c;line-height:20px;white-space:pre;transform:scaleX(1.0580);transform-origin:0 50%;">Rick Sanchez</span>
<span style="position:absolute;left:983.30px;top:488.00px;font-size:14px;font-weight:700;color:#161616;line-height:20px;white-space:pre;transform:scaleX(0.9938);transform-origin:0 50%;">10.05 USD</span>
<span style="position:absolute;left:1116.30px;top:488.00px;font-size:14px;font-weight:700;color:#161616;line-height:20px;white-space:pre;transform:scaleX(1.0224);transform-origin:0 50%;">0.05 USD</span>
<span style="position:absolute;left:1228.30px;top:488.00px;font-size:14px;font-weight:700;color:#161616;line-height:20px;white-space:pre;transform:scaleX(0.9865);transform-origin:0 50%;">10.00 USD</span>
<span style="position:absolute;left:1396.16px;top:490.50px;font-size:10px;font-weight:700;color:#fff;line-height:15px;white-space:pre;transform:scaleX(1.0973);transform-origin:50% 50%;">Completed</span>
<span style="position:absolute;left:1509.30px;top:490.00px;font-size:12px;font-weight:400;color:#1c1c1c;line-height:18px;white-space:pre;transform:scaleX(0.9882);transform-origin:0 50%;">DR6AF6FOTA6D</span>
<span style="position:absolute;left:1659.30px;top:488.00px;font-size:14px;font-weight:400;color:#1c1c1c;line-height:20px;white-space:pre;transform:scaleX(1.1164);transform-origin:0 50%;">N/A</span>
<span style="position:absolute;left:376.50px;top:560.00px;font-size:14px;font-weight:400;color:#1c1c1c;line-height:20px;white-space:pre;transform:scaleX(1.0312);transform-origin:0 50%;">10 Mar 2025</span>
<span style="position:absolute;left:533.30px;top:561.30px;font-size:12px;font-weight:700;color:#111;line-height:18px;white-space:pre;transform:scaleX(1.0764);transform-origin:0 50%;">Deposit</span>
<span style="position:absolute;left:637.80px;top:570.00px;font-size:14px;font-weight:400;color:#1c1c1c;line-height:20px;white-space:pre;transform:scaleX(1.1164);transform-origin:0 50%;">N/A</span>
<span style="position:absolute;left:811.96px;top:550.00px;font-size:14px;font-weight:400;color:#1c1c1c;line-height:20px;white-space:pre;transform:scaleX(0.9779);transform-origin:50% 50%;">TC</span>
<span style="position:absolute;left:806.80px;top:574.00px;font-size:14px;font-weight:400;color:#1c1c1c;line-height:20px;white-space:pre;transform:scaleX(1.1198);transform-origin:0 50%;">Test Customer</span>
<span style="position:absolute;left:983.30px;top:560.00px;font-size:14px;font-weight:700;color:#161616;line-height:20px;white-space:pre;transform:scaleX(1.0472);transform-origin:0 50%;">502.50 XOF</span>
<span style="position:absolute;left:1116.30px;top:560.00px;font-size:14px;font-weight:700;color:#161616;line-height:20px;white-space:pre;transform:scaleX(1.0106);transform-origin:0 50%;">2.50 XOF</span>
<span style="position:absolute;left:1228.30px;top:560.00px;font-size:14px;font-weight:700;color:#161616;line-height:20px;white-space:pre;transform:scaleX(1.0604);transform-origin:0 50%;">500.00 XOF</span>
<span style="position:absolute;left:1394.77px;top:562.00px;font-size:10px;font-weight:700;color:#1c1c1c;line-height:15px;white-space:pre;transform:scaleX(1.0443);transform-origin:50% 50%;">Pending</span>
<span style="position:absolute;left:1509.30px;top:562.00px;font-size:12px;font-weight:400;color:#1c1c1c;line-height:18px;white-space:pre;letter-spacing:-0.150px;transform:scaleX(0.9200);transform-origin:0 50%;">177Y4N2TZ1KA</span>
<span style="position:absolute;left:1660.20px;top:560.00px;font-size:14px;font-weight:400;color:#1c1c1c;line-height:20px;white-space:pre;letter-spacing:0.233px;transform:scaleX(1.1400);transform-origin:0 50%;">wave</span>
<span style="position:absolute;left:376.50px;top:632.00px;font-size:14px;font-weight:400;color:#1c1c1c;line-height:20px;white-space:pre;transform:scaleX(1.0312);transform-origin:0 50%;">10 Mar 2025</span>
<span style="position:absolute;left:533.30px;top:633.30px;font-size:12px;font-weight:700;color:#111;line-height:18px;white-space:pre;transform:scaleX(1.0764);transform-origin:0 50%;">Deposit</span>
<span style="position:absolute;left:637.80px;top:642.00px;font-size:14px;font-weight:400;color:#1c1c1c;line-height:20px;white-space:pre;transform:scaleX(1.1164);transform-origin:0 50%;">N/A</span>
<span style="position:absolute;left:811.96px;top:622.00px;font-size:14px;font-weight:400;color:#1c1c1c;line-height:20px;white-space:pre;transform:scaleX(0.9779);transform-origin:50% 50%;">TC</span>
<span style="position:absolute;left:806.80px;top:646.00px;font-size:14px;font-weight:400;color:#1c1c1c;line-height:20px;white-space:pre;transform:scaleX(1.1198);transform-origin:0 50%;">Test Customer</span>
<span style="position:absolute;left:983.30px;top:632.00px;font-size:14px;font-weight:700;color:#161616;line-height:20px;white-space:pre;transform:scaleX(1.0472);transform-origin:0 50%;">502.50 XOF</span>
<span style="position:absolute;left:1116.30px;top:632.00px;font-size:14px;font-weight:700;color:#161616;line-height:20px;white-space:pre;transform:scaleX(1.0106);transform-origin:0 50%;">2.50 XOF</span>
<span style="position:absolute;left:1228.30px;top:632.00px;font-size:14px;font-weight:700;color:#161616;line-height:20px;white-space:pre;transform:scaleX(1.0604);transform-origin:0 50%;">500.00 XOF</span>
<span style="position:absolute;left:1394.77px;top:634.00px;font-size:10px;font-weight:700;color:#1c1c1c;line-height:15px;white-space:pre;transform:scaleX(1.0443);transform-origin:50% 50%;">Pending</span>
<span style="position:absolute;left:1509.30px;top:634.00px;font-size:12px;font-weight:400;color:#1c1c1c;line-height:18px;white-space:pre;transform:scaleX(0.9958);transform-origin:0 50%;">RL23649HSJ0L</span>
<span style="position:absolute;left:1660.20px;top:632.00px;font-size:14px;font-weight:400;color:#1c1c1c;line-height:20px;white-space:pre;letter-spacing:0.233px;transform:scaleX(1.1400);transform-origin:0 50%;">wave</span>
<span style="position:absolute;left:376.50px;top:704.00px;font-size:14px;font-weight:400;color:#1c1c1c;line-height:20px;white-space:pre;transform:scaleX(1.0312);transform-origin:0 50%;">10 Mar 2025</span>
<span style="position:absolute;left:533.30px;top:705.30px;font-size:12px;font-weight:700;color:#111;line-height:18px;white-space:pre;transform:scaleX(1.0764);transform-origin:0 50%;">Deposit</span>
<span style="position:absolute;left:637.80px;top:714.00px;font-size:14px;font-weight:400;color:#1c1c1c;line-height:20px;white-space:pre;transform:scaleX(1.1164);transform-origin:0 50%;">N/A</span>
<span style="position:absolute;left:811.96px;top:694.00px;font-size:14px;font-weight:400;color:#1c1c1c;line-height:20px;white-space:pre;transform:scaleX(0.9779);transform-origin:50% 50%;">TC</span>
<span style="position:absolute;left:806.80px;top:718.00px;font-size:14px;font-weight:400;color:#1c1c1c;line-height:20px;white-space:pre;transform:scaleX(1.1198);transform-origin:0 50%;">Test Customer</span>
<span style="position:absolute;left:983.30px;top:704.00px;font-size:14px;font-weight:700;color:#161616;line-height:20px;white-space:pre;transform:scaleX(1.0472);transform-origin:0 50%;">502.50 XOF</span>
<span style="position:absolute;left:1116.30px;top:704.00px;font-size:14px;font-weight:700;color:#161616;line-height:20px;white-space:pre;transform:scaleX(1.0106);transform-origin:0 50%;">2.50 XOF</span>
<span style="position:absolute;left:1228.30px;top:704.00px;font-size:14px;font-weight:700;color:#161616;line-height:20px;white-space:pre;transform:scaleX(1.0604);transform-origin:0 50%;">500.00 XOF</span>
<span style="position:absolute;left:1394.77px;top:706.00px;font-size:10px;font-weight:700;color:#1c1c1c;line-height:15px;white-space:pre;transform:scaleX(1.0443);transform-origin:50% 50%;">Pending</span>
<span style="position:absolute;left:1509.30px;top:706.00px;font-size:12px;font-weight:400;color:#1c1c1c;line-height:18px;white-space:pre;letter-spacing:-0.174px;transform:scaleX(0.9200);transform-origin:0 50%;">KBS1Q1GKXTD6</span>
<span style="position:absolute;left:1660.20px;top:704.00px;font-size:14px;font-weight:400;color:#1c1c1c;line-height:20px;white-space:pre;letter-spacing:0.233px;transform:scaleX(1.1400);transform-origin:0 50%;">wave</span>
<span style="position:absolute;left:376.50px;top:776.00px;font-size:14px;font-weight:400;color:#1c1c1c;line-height:20px;white-space:pre;transform:scaleX(1.0312);transform-origin:0 50%;">10 Mar 2025</span>
<span style="position:absolute;left:533.30px;top:777.30px;font-size:12px;font-weight:700;color:#111;line-height:18px;white-space:pre;transform:scaleX(1.0764);transform-origin:0 50%;">Deposit</span>
<span style="position:absolute;left:637.80px;top:786.00px;font-size:14px;font-weight:400;color:#1c1c1c;line-height:20px;white-space:pre;transform:scaleX(1.1164);transform-origin:0 50%;">N/A</span>
<span style="position:absolute;left:811.96px;top:766.00px;font-size:14px;font-weight:400;color:#1c1c1c;line-height:20px;white-space:pre;transform:scaleX(0.9779);transform-origin:50% 50%;">TC</span>
<span style="position:absolute;left:806.80px;top:790.00px;font-size:14px;font-weight:400;color:#1c1c1c;line-height:20px;white-space:pre;transform:scaleX(1.1198);transform-origin:0 50%;">Test Customer</span>
<span style="position:absolute;left:983.30px;top:776.00px;font-size:14px;font-weight:700;color:#161616;line-height:20px;white-space:pre;transform:scaleX(1.0472);transform-origin:0 50%;">502.50 XOF</span>
<span style="position:absolute;left:1116.30px;top:776.00px;font-size:14px;font-weight:700;color:#161616;line-height:20px;white-space:pre;transform:scaleX(1.0106);transform-origin:0 50%;">2.50 XOF</span>
<span style="position:absolute;left:1228.30px;top:776.00px;font-size:14px;font-weight:700;color:#161616;line-height:20px;white-space:pre;transform:scaleX(1.0604);transform-origin:0 50%;">500.00 XOF</span>
<span style="position:absolute;left:1394.77px;top:778.00px;font-size:10px;font-weight:700;color:#1c1c1c;line-height:15px;white-space:pre;transform:scaleX(1.0443);transform-origin:50% 50%;">Pending</span>
<span style="position:absolute;left:1509.30px;top:778.00px;font-size:12px;font-weight:400;color:#1c1c1c;line-height:18px;white-space:pre;transform:scaleX(0.9791);transform-origin:0 50%;">K06KGFE4E245</span>
<span style="position:absolute;left:1660.20px;top:776.00px;font-size:14px;font-weight:400;color:#1c1c1c;line-height:20px;white-space:pre;letter-spacing:0.233px;transform:scaleX(1.1400);transform-origin:0 50%;">wave</span>
<span style="position:absolute;left:376.50px;top:848.00px;font-size:14px;font-weight:400;color:#1c1c1c;line-height:20px;white-space:pre;transform:scaleX(1.0312);transform-origin:0 50%;">10 Mar 2025</span>
<span style="position:absolute;left:533.30px;top:849.30px;font-size:12px;font-weight:700;color:#111;line-height:18px;white-space:pre;transform:scaleX(1.0764);transform-origin:0 50%;">Deposit</span>
<span style="position:absolute;left:637.80px;top:858.00px;font-size:14px;font-weight:400;color:#1c1c1c;line-height:20px;white-space:pre;transform:scaleX(1.1164);transform-origin:0 50%;">N/A</span>
<span style="position:absolute;left:811.96px;top:838.00px;font-size:14px;font-weight:400;color:#1c1c1c;line-height:20px;white-space:pre;transform:scaleX(0.9779);transform-origin:50% 50%;">TC</span>
<span style="position:absolute;left:806.80px;top:862.00px;font-size:14px;font-weight:400;color:#1c1c1c;line-height:20px;white-space:pre;transform:scaleX(1.1198);transform-origin:0 50%;">Test Customer</span>
<span style="position:absolute;left:983.30px;top:848.00px;font-size:14px;font-weight:700;color:#161616;line-height:20px;white-space:pre;transform:scaleX(0.9942);transform-origin:0 50%;">201.00 XOF</span>
<span style="position:absolute;left:1116.30px;top:848.00px;font-size:14px;font-weight:700;color:#161616;line-height:20px;white-space:pre;transform:scaleX(0.9689);transform-origin:0 50%;">1.00 XOF</span>
<span style="position:absolute;left:1228.30px;top:848.00px;font-size:14px;font-weight:700;color:#161616;line-height:20px;white-space:pre;transform:scaleX(1.0405);transform-origin:0 50%;">200.00 XOF</span>
<span style="position:absolute;left:1394.77px;top:850.00px;font-size:10px;font-weight:700;color:#1c1c1c;line-height:15px;white-space:pre;transform:scaleX(1.0443);transform-origin:50% 50%;">Pending</span>
<span style="position:absolute;left:1509.30px;top:850.00px;font-size:12px;font-weight:400;color:#1c1c1c;line-height:18px;white-space:pre;transform:scaleX(0.9468);transform-origin:0 50%;">YU7J7HYPBA3T</span>
<span style="position:absolute;left:1660.20px;top:848.00px;font-size:14px;font-weight:400;color:#1c1c1c;line-height:20px;white-space:pre;letter-spacing:0.233px;transform:scaleX(1.1400);transform-origin:0 50%;">wave</span>
<span style="position:absolute;left:376.50px;top:920.00px;font-size:14px;font-weight:400;color:#1c1c1c;line-height:20px;white-space:pre;transform:scaleX(1.0312);transform-origin:0 50%;">10 Mar 2025</span>
<span style="position:absolute;left:533.30px;top:921.30px;font-size:12px;font-weight:700;color:#111;line-height:18px;white-space:pre;transform:scaleX(1.1060);transform-origin:0 50%;">Transfer</span>
<span style="position:absolute;left:642.57px;top:910.00px;font-size:14px;font-weight:400;color:#1c1c1c;line-height:20px;white-space:pre;transform:scaleX(0.9387);transform-origin:50% 50%;">AR</span>
<span style="position:absolute;left:637.80px;top:934.00px;font-size:14px;font-weight:400;color:#1c1c1c;line-height:20px;white-space:pre;transform:scaleX(1.1211);transform-origin:0 50%;">Abidur Rahman</span>
<span style="position:absolute;left:806.80px;top:934.00px;font-size:14px;font-weight:400;color:#1c1c1c;line-height:20px;white-space:pre;transform:scaleX(1.1198);transform-origin:0 50%;">Test Customer</span>
<span style="position:absolute;left:983.30px;top:920.00px;font-size:14px;font-weight:700;color:#161616;line-height:20px;white-space:pre;transform:scaleX(1.0102);transform-origin:0 50%;">100.00 USD</span>
<span style="position:absolute;left:1116.30px;top:920.00px;font-size:14px;font-weight:700;color:#161616;line-height:20px;white-space:pre;transform:scaleX(1.0224);transform-origin:0 50%;">0.00 USD</span>
<span style="position:absolute;left:1228.30px;top:920.00px;font-size:14px;font-weight:700;color:#161616;line-height:20px;white-space:pre;transform:scaleX(1.0102);transform-origin:0 50%;">100.00 USD</span>
<span style="position:absolute;left:1396.16px;top:922.50px;font-size:10px;font-weight:700;color:#fff;line-height:15px;white-space:pre;transform:scaleX(1.0973);transform-origin:50% 50%;">Completed</span>
<span style="position:absolute;left:1509.30px;top:922.00px;font-size:12px;font-weight:400;color:#1c1c1c;line-height:18px;white-space:pre;transform:scaleX(0.9670);transform-origin:0 50%;">SO7VRVTV9VPX</span>
<span style="position:absolute;left:1659.30px;top:920.00px;font-size:14px;font-weight:400;color:#1c1c1c;line-height:20px;white-space:pre;transform:scaleX(1.1164);transform-origin:0 50%;">N/A</span>
<span style="position:absolute;left:408.38px;top:1004.20px;font-size:13px;font-weight:400;color:#1c1c1c;line-height:19px;white-space:pre;">1</span>
<span style="position:absolute;left:448.38px;top:1004.20px;font-size:13px;font-weight:700;color:#fff;line-height:19px;white-space:pre;">2</span>
<span style="position:absolute;left:488.38px;top:1004.20px;font-size:13px;font-weight:400;color:#1c1c1c;line-height:19px;white-space:pre;">3</span>
<span style="position:absolute;left:528.38px;top:1004.20px;font-size:13px;font-weight:400;color:#1c1c1c;line-height:19px;white-space:pre;">4</span>
<span style="position:absolute;left:616.30px;top:1004.00px;font-size:14px;font-weight:400;color:#6f6f6f;line-height:20px;white-space:pre;transform:scaleX(1.0563);transform-origin:0 50%;">Showing 11-20 of 35</span>
<span style="position:absolute;left:1882.66px;top:1001.30px;font-size:12px;font-weight:700;color:#fff;line-height:18px;white-space:pre;">1</span>
</body></html>
